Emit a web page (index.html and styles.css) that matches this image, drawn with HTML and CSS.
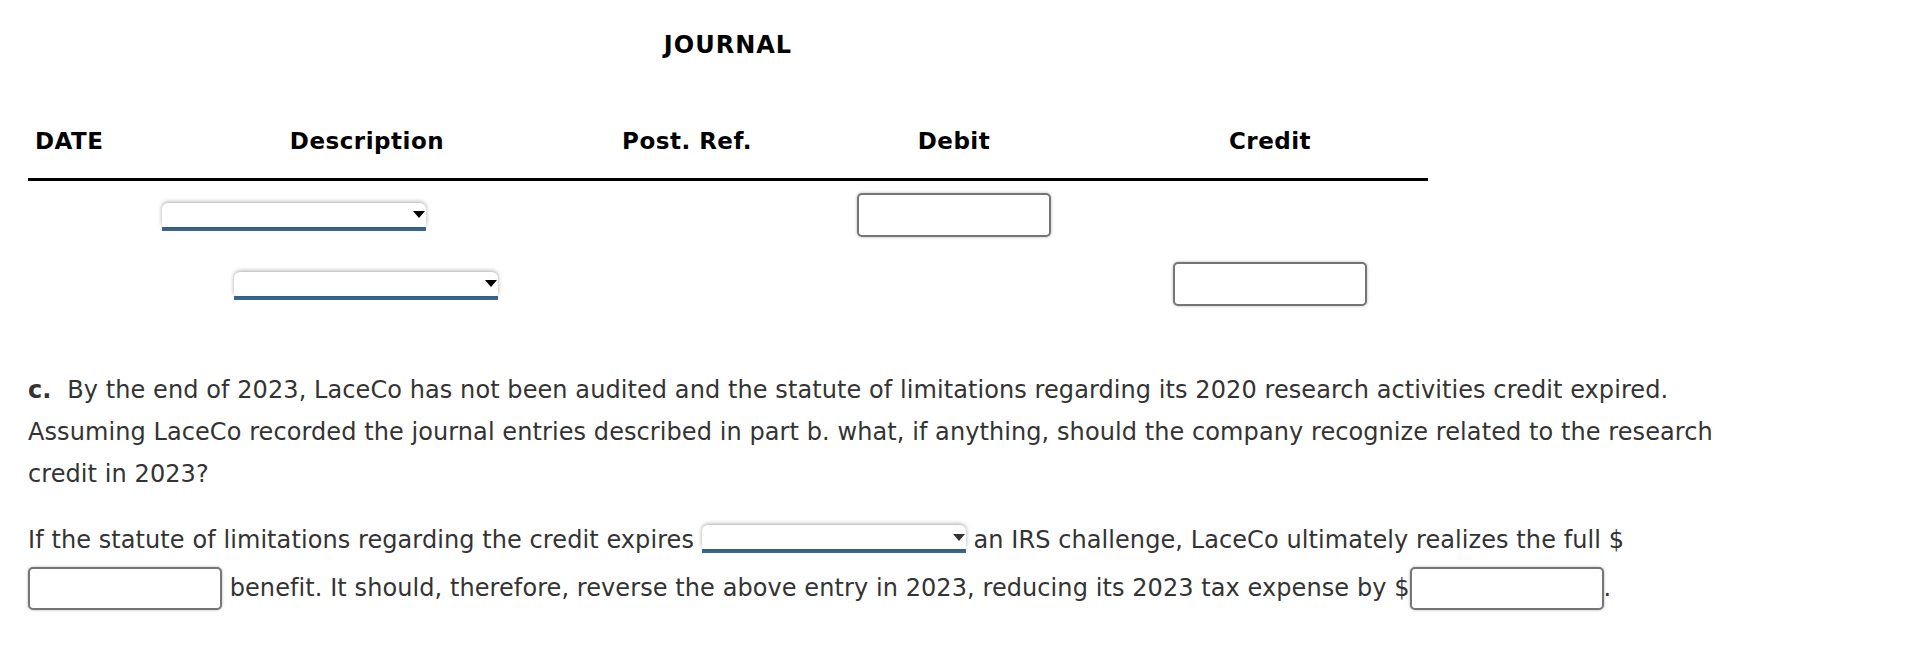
FILE: index.html
```html
<!DOCTYPE html>
<html lang="en">
<head>
<meta charset="utf-8">
<title>Journal</title>
<link rel="stylesheet" href="styles.css">
</head>
<body>
<div class="page">
  <div class="journal-title">JOURNAL</div>
  <div class="journal">
    <div class="jrow jhead">
      <div class="hcell hdate">DATE</div>
      <div class="hcell">Description</div>
      <div class="hcell">Post. Ref.</div>
      <div class="hcell">Debit</div>
      <div class="hcell">Credit</div>
    </div>
    <div class="jrow entry entry-debit">
      <div class="cell"></div>
      <div class="cell desc"><span class="select row-select"><span class="select-box"></span></span></div>
      <div class="cell"></div>
      <div class="cell amt"><input class="field" type="text" aria-label="Debit"></div>
      <div class="cell"></div>
    </div>
    <div class="jrow entry entry-credit">
      <div class="cell"></div>
      <div class="cell desc desc-indent"><span class="select row-select"><span class="select-box"></span></span></div>
      <div class="cell"></div>
      <div class="cell"></div>
      <div class="cell amt"><input class="field" type="text" aria-label="Credit"></div>
    </div>
  </div>
  <p class="question"><b class="part">c.</b> By the end of 2023, LaceCo has not been audited and the statute of limitations regarding its 2020 research activities credit expired. Assuming LaceCo recorded the journal entries described in part b. what, if anything, should the company recognize related to the research credit in 2023?</p>
  <p class="answer">If the statute of limitations regarding the credit expires <span class="select inline-select"><span class="select-box"></span></span> an IRS challenge, LaceCo ultimately realizes the full $ <input class="field field-inline" type="text" aria-label="Benefit"> benefit. It should, therefore, reverse the above entry in 2023, reducing its 2023 tax expense by $<input class="field field-inline" type="text" aria-label="Reduction">.</p>
</div>
</body>
</html>
```

FILE: styles.css
```css
body {
  margin: 0;
  background: #fff;
  color: #333;
  font-family: "DejaVu Sans", Verdana, sans-serif;
}

.page {
  width: 1740px;
  padding: 30px 28px 0;
}

.journal-title {
  width: 1400px;
  text-align: center;
  font-weight: bold;
  font-size: 24px;
  line-height: 30px;
  letter-spacing: 1px;
  color: #000;
}

.journal {
  width: 1400px;
  margin-top: 66px;
}

.jrow {
  display: grid;
  grid-template-columns: 128px 422px 218px 316px 316px;
}

.jhead {
  font-weight: bold;
  font-size: 23px;
  line-height: 30px;
  letter-spacing: 0.5px;
  color: #000;
  padding-bottom: 22px;
  border-bottom: 3px solid #000;
}

.hcell {
  text-align: center;
}

.hdate {
  text-align: left;
  padding-left: 7px;
}

.entry {
  height: 44px;
  align-items: center;
}

.entry-debit {
  margin-top: 12px;
}

.entry-credit {
  margin-top: 25px;
}

.desc {
  display: flex;
  padding-left: 6px;
}

.desc-indent {
  padding-left: 78px;
}

.amt {
  display: flex;
  justify-content: center;
}

/* dropdown */
.select {
  display: inline-block;
  box-sizing: border-box;
  width: 264px;
  height: 28px;
  border-bottom: 4px solid #3c6592;
}

.row-select {
  margin-top: 4px;
}

.select-box {
  position: relative;
  display: block;
  height: 24px;
  background: #fff;
  border-radius: 6px 6px 3px 3px;
  box-shadow: 0 -1px 4px rgba(0, 0, 0, 0.35);
}

.select-box::after {
  content: "";
  position: absolute;
  right: 1px;
  top: 8px;
  border-left: 6px solid transparent;
  border-right: 6px solid transparent;
  border-top: 7px solid #000;
}

.inline-select {
  vertical-align: -5px;
}

.inline-select .select-box::after {
  top: 9px;
  border-top-color: #333;
}

/* text inputs */
.field {
  box-sizing: border-box;
  width: 194px;
  height: 44px;
  margin: 0;
  padding: 0 6px;
  border: 2px solid #767676;
  border-radius: 5px;
  background: #fff;
  box-shadow: 0 0 3px rgba(0, 0, 0, 0.3);
  font: inherit;
  outline: none;
}

.field-inline {
  height: 43px;
  vertical-align: middle;
  margin: 6px 0;
}

.question,
.answer {
  margin: 0;
  font-size: 24px;
  line-height: 42px;
  letter-spacing: 0.08px;
}

.question {
  margin-top: 63px;
}

.part {
  font-weight: bold;
  margin-right: 8px;
}

.answer {
  margin-top: 24px;
}
```
